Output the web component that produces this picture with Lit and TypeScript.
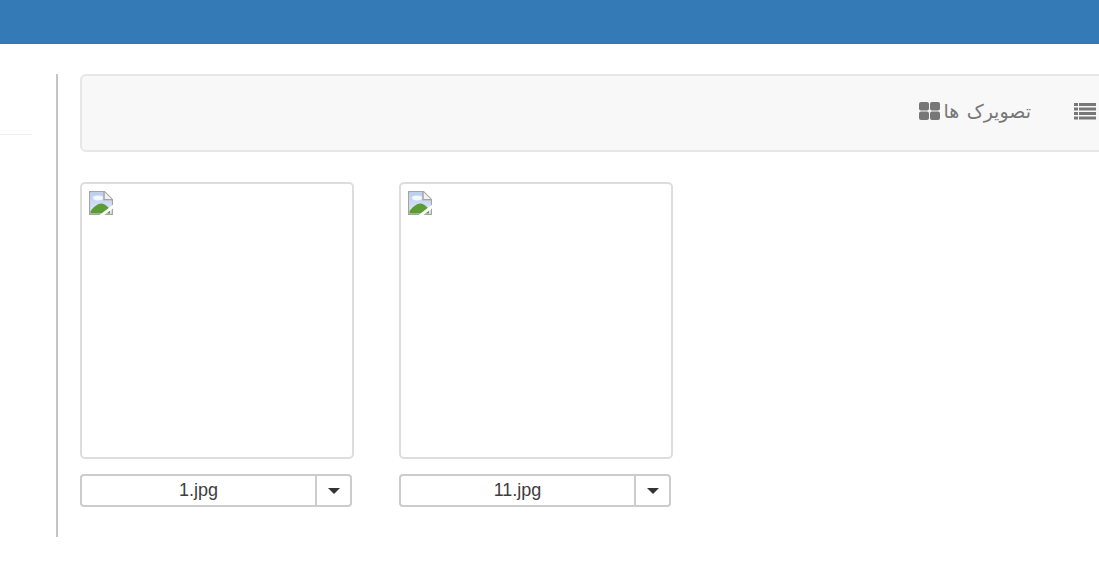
import { LitElement, html, css, svg } from "lit";
import { customElement } from "lit/decorators.js";

const brokenImage = svg`<svg class="broken" width="24" height="24" viewBox="0 0 24 24">
  <defs>
    <linearGradient id="sky" x1="0" y1="0" x2="0" y2="1">
      <stop offset="0" stop-color="#b9cef2"/>
      <stop offset="1" stop-color="#dfe9fa"/>
    </linearGradient>
  </defs>
  <path d="M0.75 0.75H15.5L23.25 8.5V23.25H0.75Z" fill="#fff" stroke="#a4a4a4" stroke-width="1.5"/>
  <path d="M1.5 1.5H14.5V9.5H22.5V22.5H1.5Z" fill="url(#sky)"/>
  <ellipse cx="9" cy="7" rx="5" ry="2.4" fill="#f4f7fd"/>
  <path d="M1.5 22.5V20C5 15.5 9.5 12 13 12.5C16 13 18.5 15 21 18.5V22.5Z" fill="#5c9c34"/>
  <path d="M15 0.75V8.75H23.25" fill="#f2f2f2" stroke="#a4a4a4" stroke-width="1.5"/>
  <path d="M11 25.5L25.5 14.5" stroke="#fff" stroke-width="3"/>
</svg>`;

const gridIcon = svg`<svg width="21" height="18" viewBox="0 0 21 18" fill="#777">
  <rect x="0" y="0" width="10" height="8.5" rx="2"/><rect x="11" y="0" width="10" height="8.5" rx="2"/>
  <rect x="0" y="9.5" width="10" height="8.5" rx="2"/><rect x="11" y="9.5" width="10" height="8.5" rx="2"/>
</svg>`;

const listIcon = svg`<svg width="22" height="18" viewBox="0 0 22 18" fill="#777">
  <rect x="0" y="1" width="4" height="3"/><rect x="5" y="1" width="17" height="3"/>
  <rect x="0" y="5.5" width="4" height="3"/><rect x="5" y="5.5" width="17" height="3"/>
  <rect x="0" y="10" width="4" height="3"/><rect x="5" y="10" width="17" height="3"/>
  <rect x="0" y="14.5" width="4" height="3"/><rect x="5" y="14.5" width="17" height="3"/>
</svg>`;

@customElement("app-root")
export class AppRoot extends LitElement {
  static styles = css`
    :host {
      display: block;
      width: 1099px;
      height: 582px;
      overflow: hidden;
      background: #fff;
      font-family: "Liberation Sans", "DejaVu Sans", Arial, sans-serif;
      font-size: 18px;
      color: #3d3d3d;
    }
    .top { height: 44px; background: #337ab7; }
    .page { display: flex; padding-top: 30px; }
    .side {
      flex: none;
      box-sizing: border-box;
      width: 58px;
      height: 463px;
      border-right: 2px solid #c4c4c4;
      padding-top: 60px;
    }
    .rule { width: 32px; height: 1px; background: #eee; }
    .main { flex: none; width: 1100px; padding-left: 22px; }
    .nav {
      box-sizing: border-box;
      width: 1100px;
      height: 78px;
      background: #f8f8f8;
      border: 2px solid #e7e7e7;
      border-radius: 6px;
      display: flex;
      align-items: center;
      color: #777;
      padding-left: 837px;
      padding-bottom: 4px;
      margin-bottom: 30px;
    }
    .nav-item { display: flex; align-items: center; }
    .thumbs-label {
      direction: rtl;
      font-size: 19px;
      word-spacing: 2px;
      margin-left: 4px;
      width: 87px;
      white-space: nowrap;
    }
    .list { margin-left: 43px; display: flex; }
    .cards { display: flex; gap: 45px; }
    .card { width: 274px; }
    .frame {
      box-sizing: border-box;
      width: 274px;
      height: 277px;
      border: 2px solid #ddd;
      border-radius: 5px;
      padding: 7px;
      margin-bottom: 15px;
    }
    .broken { display: block; }
    .group { display: flex; width: 272px; height: 33px; }
    .name, .caret {
      box-sizing: border-box;
      height: 33px;
      border: 2px solid #ccc;
      display: flex;
      align-items: center;
      justify-content: center;
    }
    .name {
      width: 237px;
      flex: none;
      padding-bottom: 2px;
      border-radius: 4px 0 0 4px;
      font-size: 18px;
      line-height: 1;
    }
    .caret {
      width: 37px;
      margin-left: -2px;
      border-radius: 0 4px 4px 0;
      flex: none;
    }
    .arrow {
      width: 0;
      height: 0;
      border-left: 6px solid transparent;
      border-right: 6px solid transparent;
      border-top: 6px solid #333;
    }
  `;

  private card(name: string) {
    return html`<div class="card">
      <div class="frame">${brokenImage}</div>
      <div class="group">
        <div class="name">${name}</div>
        <div class="caret"><span class="arrow"></span></div>
      </div>
    </div>`;
  }

  render() {
    return html`
      <div class="top"></div>
      <div class="page">
        <div class="side"><div class="rule"></div></div>
        <div class="main">
          <div class="nav">
            <div class="nav-item">${gridIcon}<span class="thumbs-label">تصویرک ها</span></div>
            <div class="list">${listIcon}</div>
          </div>
          <div class="cards">${this.card("1.jpg")}${this.card("11.jpg")}</div>
        </div>
      </div>
    `;
  }
}
